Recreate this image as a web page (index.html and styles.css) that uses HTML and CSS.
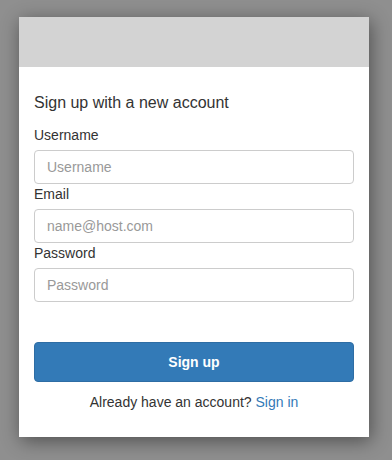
FILE: index.html
```html
<!DOCTYPE html>
<html>
<head>
<meta charset="utf-8">
<link rel="stylesheet" href="styles.css">
</head>
<body>
<div class="card">
  <div class="card-header"></div>
  <div class="card-body">
    <div class="title">Sign up with a new account</div>
    <label class="label" for="u">Username</label>
    <input class="field" id="u" type="text" placeholder="Username">
    <label class="label" for="e">Email</label>
    <input class="field" id="e" type="text" placeholder="name@host.com">
    <label class="label" for="p">Password</label>
    <input class="field" id="p" type="password" placeholder="Password">
    <button class="submit" type="button">Sign up</button>
    <div class="footer">Already have an account? <a class="link" href="#">Sign in</a></div>
  </div>
</div>
</body>
</html>
```

FILE: styles.css
```css
html, body {
  margin: 0;
  padding: 0;
}
body {
  background: #8f8f8f;
  font-family: "Liberation Sans", Arial, sans-serif;
  color: #333;
  padding-top: 17px;
  padding-left: 19px;
  height: 460px;
  box-sizing: border-box;
}
.card {
  width: 350px;
  background: #fff;
  box-shadow: 2px 4px 18px rgba(0, 0, 0, 0.45);
}
.card-header {
  height: 50px;
  background: #d3d3d3;
}
.card-body {
  padding: 25px 15px 25px 15px;
  display: flex;
  flex-direction: column;
}
.title {
  font-size: 16px;
  line-height: 22px;
  margin-bottom: 11px;
}
.label {
  display: block;
  font-size: 14px;
  line-height: 20px;
  margin-bottom: 5px;
}
.field {
  display: block;
  width: 100%;
  height: 34px;
  box-sizing: border-box;
  margin: 0;
  padding: 6px 12px;
  border: 1px solid #ccc;
  border-radius: 4px;
  font-family: "Liberation Sans", Arial, sans-serif;
  font-size: 14px;
  color: #555;
  background: #fff;
  outline: none;
}
.field::placeholder {
  color: #999;
}
.submit {
  margin-top: 40px;
  height: 40px;
  width: 100%;
  background: #337ab7;
  border: 1px solid #2e6da4;
  border-radius: 4px;
  color: #fff;
  font-family: "Liberation Sans", Arial, sans-serif;
  font-size: 14px;
  font-weight: bold;
  padding: 0;
}
.footer {
  margin-top: 10px;
  font-size: 14px;
  line-height: 20px;
  text-align: center;
}
.link {
  color: #337ab7;
  text-decoration: none;
}
```
